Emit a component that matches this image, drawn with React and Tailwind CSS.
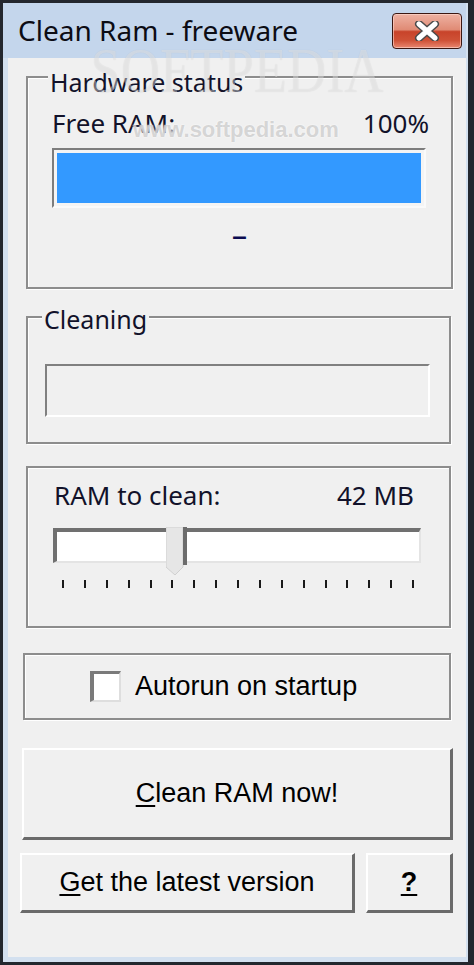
import React from 'react'

const ui = "font-['Noto_Sans',sans-serif]"
const classic = "font-['Liberation_Sans',Arial,sans-serif]"

const GroupBox = ({ label, labelPos, className, children }) => (
  <div className={`relative shrink-0 border-2 border-[#8d8d8d] shadow-[inset_1px_1px_0_#ffffff,1px_1px_0_#ffffff] ${className}`}>
    {label && (
      <span className={`absolute ${labelPos} bg-[#f0f0f0] px-[2px] text-[25px] leading-none text-[#12122a] ${ui}`}>
        {label}
      </span>
    )}
    {children}
  </div>
)

const RaisedButton = ({ className, children }) => (
  <button className={`flex shrink-0 items-center justify-center border-t-2 border-l-2 border-white border-b-[3px] border-r-[3px] border-b-[#6a6a6a] border-r-[#6a6a6a] bg-[#f0f0f0] text-[27px] leading-none text-black ${classic} ${className}`}>
    {children}
  </button>
)

const ticks = Array.from({ length: 17 })

export default function App() {
  return (
    <div className="relative flex h-[965px] w-[474px] overflow-hidden bg-[#23272e]">
      {/* window frame */}
      <div className="ml-[3px] mt-[3px] flex h-[959px] w-[465px] flex-col bg-[#d3e0ef] pb-[5px] pr-[2px]">
        {/* title bar */}
        <div className="flex h-[55px] shrink-0 items-start justify-between bg-[#c4d6ec]">
          <span className={`ml-[15px] mt-[13px] text-[28px] leading-none text-[#0c0c14] ${ui}`}>
            Clean Ram - freeware
          </span>
          <div className="mr-[4px] mt-[10px] flex h-[36px] w-[70px] items-center justify-center rounded-[4px] border border-[#3b1712] bg-[linear-gradient(#eeb2a3_0%,#e08b75_46%,#c8432a_52%,#cf5237_78%,#e98770_100%)] shadow-[inset_0_0_0_1px_rgba(255,220,210,0.6)]">
            <svg width="26" height="20" viewBox="0 0 26 20">
              <path d="M5 3 L21 17 M21 3 L5 17" stroke="#4a4a4a" strokeWidth="8" strokeLinecap="round" />
              <path d="M5 3 L21 17 M21 3 L5 17" stroke="#ffffff" strokeWidth="5" strokeLinecap="round" />
            </svg>
          </div>
        </div>

        {/* client area */}
        <div className="ml-[5px] flex flex-1 flex-col bg-[#f0f0f0]">
          <GroupBox label="Hardware status" labelPos="top-[-8px] left-[20px]" className="ml-[18px] mt-[18px] h-[213px] w-[427px]">
            <div className={`flex justify-between pl-[24px] pr-[22px] pt-[32px] text-[26px] leading-none text-[#12122a] ${ui}`}>
              <span>Free RAM:</span>
              <span>100%</span>
            </div>
            <div className="ml-[24px] mr-[25px] mt-[12px] h-[60px] border-t-2 border-l-2 border-[#7d7d7d] border-b-2 border-r-2 border-b-[#fafafa] border-r-[#fafafa] bg-[#f4f4f4] p-[3px]">
              <div className="h-full w-full bg-[#3399ff]" />
            </div>
            <div className={`mt-[15px] text-center text-[26px] font-bold leading-none text-[#0b0b50] ${classic}`}>–</div>
          </GroupBox>

          <GroupBox label="Cleaning" labelPos="top-[-11px] left-[14px]" className="ml-[18px] mt-[27px] h-[128px] w-[425px]">
            <div className="ml-[17px] mr-[19px] mt-[46px] h-[53px] border-t-2 border-l-2 border-[#808080] border-b-2 border-r-2 border-b-white border-r-white" />
          </GroupBox>

          <GroupBox className="ml-[18px] mt-[22px] h-[162px] w-[425px]">
            <div className={`flex justify-between pl-[26px] pr-[35px] pt-[14px] text-[26px] leading-none text-[#12122a] ${ui}`}>
              <span>RAM to clean:</span>
              <span>42 MB</span>
            </div>
            <div className="relative ml-[25px] mr-[28px] mt-[20px] h-[35px] border-t-4 border-l-4 border-[#707070] border-b-2 border-r-2 border-b-[#e4e4e4] border-r-[#e4e4e4] bg-white">
              <svg className="absolute left-[109px] top-[-5px]" width="21" height="48" viewBox="0 0 21 48">
                <polygon points="0,0 17,0 17,40 9,48 0,40" fill="#e6e6e6" stroke="#d0d0d0" strokeWidth="1" />
                <rect x="17" y="0" width="4" height="38" fill="#6c6c6c" />
              </svg>
            </div>
            <div className="ml-[34px] mr-[35px] mt-[17px] flex justify-between">
              {ticks.map((_, i) => (
                <div key={i} className="h-[8px] w-[2px] bg-[#1a1a1a]" />
              ))}
            </div>
          </GroupBox>

          <GroupBox className="ml-[15px] mt-[25px] flex h-[67px] w-[428px] items-center">
            <div className="ml-[65px] h-[31px] w-[31px] border-t-[3px] border-l-4 border-[#7a7a7a] border-b-2 border-r-2 border-b-[#dedede] border-r-[#dedede] bg-white" />
            <span className={`ml-[14px] text-[27px] leading-none text-black ${classic}`}>Autorun on startup</span>
          </GroupBox>

          <RaisedButton className="ml-[14px] mt-[28px] h-[92px] w-[431px]">
            <span className="underline decoration-2 underline-offset-[3px]">C</span>lean RAM now!
          </RaisedButton>

          <div className="ml-[12px] mt-[13px] flex h-[60px] gap-[11px]">
            <RaisedButton className="h-[60px] w-[335px]">
              <span className="underline decoration-2 underline-offset-[3px]">G</span>et the latest version
            </RaisedButton>
            <RaisedButton className="h-[60px] w-[87px] font-bold">
              <span className="underline decoration-2 underline-offset-[3px]">?</span>
            </RaisedButton>
          </div>
        </div>
      </div>

      {/* softpedia watermark */}
      <div className="pointer-events-none absolute left-0 right-0 top-[39px] scale-x-[0.85] text-center font-['Liberation_Serif',serif] text-[64px] leading-none text-white/40 [text-shadow:0_0_1px_rgba(0,0,0,0.12)]">
        SOFTPEDIA
      </div>
      <div className={`pointer-events-none absolute left-[133px] top-[119px] text-[22px] font-bold leading-none text-[#c4c4c4]/70 [text-shadow:0_0_2px_#ffffff] ${classic}`}>
        www.softpedia.com
      </div>
    </div>
  )
}
